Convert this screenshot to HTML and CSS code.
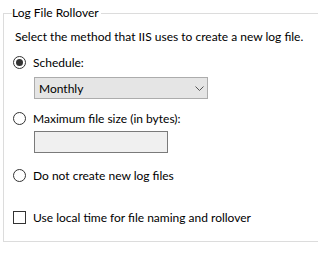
FILE: index.html
```html
<!DOCTYPE html>
<html lang="en">
<head>
    <meta charset="UTF-8">
    <title>Log File Rollover</title>
    <link rel="stylesheet" href="styles.css">
</head>
<body>
    <fieldset class="group">
        <legend>Log File Rollover</legend>
        <p class="intro">Select the method that IIS uses to create a new log file.</p>

        <label class="option">
            <span class="radio checked"></span>
            <span>Schedule:</span>
        </label>
        <div class="select">
            <span>Monthly</span>
            <svg class="chevron" width="9" height="5" viewBox="0 0 9 5">
                <polyline points="0.5,0.5 4.5,4.5 8.5,0.5" fill="none" stroke="#555" stroke-width="1"/>
            </svg>
        </div>

        <label class="option size-row">
            <span class="radio"></span>
            <span>Maximum file size (in bytes):</span>
        </label>
        <div class="textbox"></div>

        <label class="option none-row">
            <span class="radio"></span>
            <span>Do not create new log files</span>
        </label>

        <label class="option check-row">
            <span class="checkbox"></span>
            <span>Use local time for file naming and rollover</span>
        </label>
    </fieldset>
</body>
</html>
```
FILE: styles.css
```css
html, body {
    margin: 0;
    padding: 0;
    background: #fff;
    overflow: hidden;
}

body {
    font-family: Lato, "Segoe UI", sans-serif;
    font-size: 12px;
    color: #000;
}

.group {
    margin: 5px 0 0 3px;
    width: 340px;
    padding: 0 0 16px 9px;
    border: 1px solid #dcdcdc;
    box-sizing: border-box;
}

.group legend {
    padding: 0 2px 0 0;
    margin-left: -1px;
    line-height: 16px;
}

.intro {
    margin: 8px 0 0 2px;
    line-height: 16px;
}

.option {
    display: flex;
    align-items: center;
    gap: 7px;
    height: 16px;
    margin-top: 9px;
}

.radio {
    width: 11px;
    height: 11px;
    border: 1px solid #333;
    border-radius: 50%;
    box-sizing: content-box;
    display: flex;
    align-items: center;
    justify-content: center;
}

.radio.checked::after {
    content: "";
    width: 7px;
    height: 7px;
    border-radius: 50%;
    background: #333;
}

.select {
    width: 174px;
    height: 22px;
    margin: 7px 0 0 21px;
    background: #e5e5e5;
    border: 1px solid #acacac;
    box-sizing: border-box;
    display: flex;
    align-items: center;
    justify-content: space-between;
    padding: 0 3px 0 4px;
}

.size-row {
    margin-top: 11px;
}

.textbox {
    width: 134px;
    height: 22px;
    margin: 5px 0 0 21px;
    background: #f0f0f0;
    border: 1px solid #7a7a7a;
    box-sizing: border-box;
}

.none-row {
    margin-top: 14px;
}

.checkbox {
    width: 11px;
    height: 11px;
    border: 1px solid #333;
}

.check-row {
    margin-top: 26px;
}
```
